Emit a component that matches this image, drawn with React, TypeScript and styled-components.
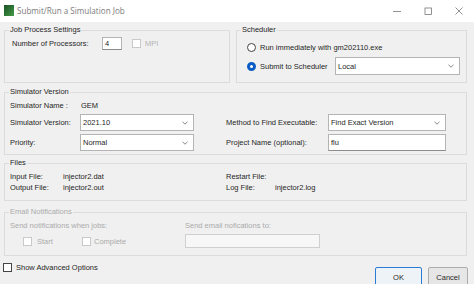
import React from "react";
import styled, { createGlobalStyle } from "styled-components";

const GlobalStyle = createGlobalStyle`
  html, body {
    margin: 0;
    padding: 0;
    background: #f0f0f0;
  }
  body {
    font-family: "Liberation Sans", Arial, sans-serif;
    font-size: 7.5px;
    color: #262626;
  }
`;

const Window = styled.div`
  width: 474px;
  height: 284px;
  overflow: hidden;
  background: #f0f0f0;
`;

const TitleBar = styled.div`
  height: 22px;
  background: #ffffff;
  display: flex;
  align-items: center;
`;

const AppIcon = styled.div`
  width: 10px;
  height: 11px;
  margin: 0 3px 1px 4px;
  background: linear-gradient(135deg, #1f4f25 0%, #2f7a38 55%, #4a9a4a 100%);
`;

const Title = styled.div`
  flex: 1;
  font-family: "Open Sans", "Noto Sans", sans-serif;
  font-size: 8.1px;
  color: #7b7b7b;
  margin-bottom: 1px;
`;

const ControlButton = styled.div`
  width: 31px;
  height: 22px;
  display: flex;
  align-items: center;
  justify-content: center;
`;

const Body = styled.div`
  padding: 3px 7px 0 4px;
  display: flex;
  flex-direction: column;
`;

const TopRow = styled.div`
  display: flex;
  gap: 6px;
`;

const Group = styled.fieldset<{ $w?: number; $h?: number; $gapTop?: number; $disabled?: boolean }>`
  box-sizing: border-box;
  margin: ${(p) => p.$gapTop ?? 0}px 0 0 0;
  padding: 0 6px 0 6px;
  border: 1px solid #dcdcdc;
  min-inline-size: 0;
  ${(p) => (p.$w ? `width: ${p.$w}px;` : "")}
  ${(p) => (p.$h ? `height: ${p.$h}px;` : "")}
  color: ${(p) => (p.$disabled ? "#ababab" : "#262626")};
`;

const Legend = styled.legend`
  padding: 0 1px;
  margin-left: -2px;
  line-height: 10px;
  font-size: 7.5px;
`;

const Row = styled.div<{ $h?: number; $mt?: number }>`
  display: flex;
  align-items: center;
  height: ${(p) => p.$h ?? 13}px;
  margin-top: ${(p) => p.$mt ?? 0}px;
`;

const Label = styled.span<{ $w?: number }>`
  display: inline-block;
  flex-shrink: 0;
  ${(p) => (p.$w ? `width: ${p.$w}px;` : "")}
  white-space: nowrap;
`;

const TextBox = styled.div<{ $w: number; $h?: number; $disabled?: boolean }>`
  box-sizing: border-box;
  width: ${(p) => p.$w}px;
  height: ${(p) => p.$h ?? 17}px;
  background: ${(p) => (p.$disabled ? "#f7f7f7" : "#ffffff")};
  border: 1px solid ${(p) => (p.$disabled ? "#cfcfcf" : "#b4b4b4")};
  border-bottom-color: ${(p) => (p.$disabled ? "#cfcfcf" : "#8c8c8c")};
  padding: 0 2px;
  display: flex;
  align-items: center;
  color: #262626;
`;

const Combo = styled.div<{ $w: number; $h?: number }>`
  box-sizing: border-box;
  width: ${(p) => p.$w}px;
  height: ${(p) => p.$h ?? 17}px;
  background: #ffffff;
  border: 1px solid #b4b4b4;
  padding: 0 5px 0 2px;
  display: flex;
  align-items: center;
  justify-content: space-between;
  color: #262626;
`;

const Check = styled.span<{ $disabled?: boolean }>`
  box-sizing: border-box;
  display: inline-block;
  flex-shrink: 0;
  width: 9px;
  height: 9px;
  background: #ffffff;
  border: 1px solid ${(p) => (p.$disabled ? "#c9c9c9" : "#444444")};
`;

const Radio = styled.span<{ $checked?: boolean }>`
  box-sizing: border-box;
  display: inline-block;
  flex-shrink: 0;
  width: 9px;
  height: 9px;
  border-radius: 50%;
  background: #ffffff;
  border: ${(p) => (p.$checked ? "3px solid #0b5cc5" : "1px solid #444444")};
`;

const ChoiceText = styled.span<{ $w?: number; $gap?: number }>`
  margin-left: ${(p) => p.$gap ?? 4}px;
  white-space: nowrap;
  ${(p) => (p.$w ? `width: ${p.$w}px; flex-shrink: 0;` : "")}
`;

const SimGrid = styled.div`
  display: grid;
  grid-template-columns: 70px 146px 102px 118px;
  grid-template-rows: 12px 17px 17px;
  row-gap: 3px;
  align-items: center;
  margin: 2px 0 3px -1px;
`;

const FilesGrid = styled.div`
  display: grid;
  grid-template-columns: 53px 163px 49px auto;
  grid-auto-rows: 11px;
  align-items: center;
  margin: 3px 0 0 -1px;
`;

const EmailBody = styled.div`
  display: flex;
  margin: 3px 0 0 -1px;
`;

const Column = styled.div<{ $w?: number }>`
  display: flex;
  flex-direction: column;
  ${(p) => (p.$w ? `width: ${p.$w}px;` : "")}
`;

const Footer = styled.div`
  display: flex;
  justify-content: space-between;
  align-items: flex-start;
  margin: 6px -1px 0 -1px;
`;

const FooterCheck = styled.div`
  display: flex;
  align-items: center;
  height: 10px;
`;

const Buttons = styled.div`
  display: flex;
  gap: 6px;
  margin-top: 5px;
`;

const Button = styled.div<{ $w: number; $primary?: boolean }>`
  box-sizing: border-box;
  width: ${(p) => p.$w}px;
  height: 20px;
  display: flex;
  align-items: center;
  justify-content: center;
  background: ${(p) => (p.$primary ? "#eef3f8" : "#e6e6e6")};
  border: 1px solid ${(p) => (p.$primary ? "#2a7bd3" : "#adadad")};
  border-radius: 2px;
`;

const Chevron = () => (
  <svg width="6" height="4" viewBox="0 0 6 4">
    <path d="M0.5 0.8 L3 3.2 L5.5 0.8" fill="none" stroke="#6a6a6a" strokeWidth="0.8" />
  </svg>
);

export default function App() {
  return (
    <>
      <GlobalStyle />
      <Window>
        <TitleBar>
          <AppIcon />
          <Title>Submit/Run a Simulation Job</Title>
          <ControlButton>
            <svg width="10" height="10" viewBox="0 0 10 10">
              <path d="M1 5.5 H9" stroke="#777" strokeWidth="0.8" />
            </svg>
          </ControlButton>
          <ControlButton>
            <svg width="10" height="10" viewBox="0 0 10 10">
              <rect x="2" y="2" width="6.5" height="6.5" fill="none" stroke="#777" strokeWidth="0.8" />
            </svg>
          </ControlButton>
          <ControlButton>
            <svg width="10" height="10" viewBox="0 0 10 10">
              <path d="M1.5 1.5 L8.5 8.5 M8.5 1.5 L1.5 8.5" stroke="#777" strokeWidth="0.8" />
            </svg>
          </ControlButton>
        </TitleBar>

        <Body>
          <TopRow>
            <Group $w={227} $h={58}>
              <Legend>Job Process Settings</Legend>
              <Row $mt={2}>
                <Label $w={90} style={{ marginLeft: 1 }}>Number of Processors:</Label>
                <TextBox $w={20} $h={13}>4</TextBox>
                <Check $disabled style={{ marginLeft: 10 }} />
                <ChoiceText style={{ color: "#b4b4b4" }}>MPI</ChoiceText>
              </Row>
            </Group>

            <Group $w={232} $h={58}>
              <Legend>Scheduler</Legend>
              <Row $mt={6} $h={13} style={{ marginLeft: 4 }}>
                <Radio />
                <ChoiceText>Run immediately with gm202110.exe</ChoiceText>
              </Row>
              <Row $mt={3} $h={18} style={{ marginLeft: 4 }}>
                <Radio $checked />
                <ChoiceText $w={75}>Submit to Scheduler</ChoiceText>
                <Combo $w={126} $h={18}>
                  <span>Local</span>
                  <Chevron />
                </Combo>
              </Row>
            </Group>
          </TopRow>

          <Group $gapTop={4}>
            <Legend>Simulator Version</Legend>
            <SimGrid>
              <Label>Simulator Name :</Label>
              <Label style={{ marginLeft: 1 }}>GEM</Label>
              <span />
              <span />

              <Label>Simulator Version:</Label>
              <Combo $w={114}>
                <span>2021.10</span>
                <Chevron />
              </Combo>
              <Label>Method to Find Executable:</Label>
              <Combo $w={118}>
                <span>Find Exact Version</span>
                <Chevron />
              </Combo>

              <Label>Priority:</Label>
              <Combo $w={114}>
                <span>Normal</span>
                <Chevron />
              </Combo>
              <Label>Project Name (optional):</Label>
              <TextBox $w={118}>flu</TextBox>
            </SimGrid>
          </Group>

          <Group $gapTop={3} $h={43}>
            <Legend>Files</Legend>
            <FilesGrid>
              <Label>Input File:</Label>
              <Label>injector2.dat</Label>
              <Label>Restart File:</Label>
              <span />
              <Label>Output File:</Label>
              <Label>injector2.out</Label>
              <Label>Log File:</Label>
              <Label>injector2.log</Label>
            </FilesGrid>
          </Group>

          <Group $gapTop={6} $h={49} $disabled>
            <Legend>Email Notifications</Legend>
            <EmailBody>
              <Column $w={175}>
                <Row $h={10}>
                  <Label>Send notifications when jobs:</Label>
                </Row>
                <Row $h={14} $mt={4} style={{ paddingLeft: 13 }}>
                  <Check $disabled />
                  <ChoiceText $w={45} $gap={5}>Start</ChoiceText>
                  <Check $disabled />
                  <ChoiceText $gap={3}>Complete</ChoiceText>
                </Row>
              </Column>
              <Column>
                <Row $h={10}>
                  <Label>Send email nofications to:</Label>
                </Row>
                <Row $h={14} $mt={4}>
                  <TextBox $w={135} $h={14} $disabled />
                </Row>
              </Column>
            </EmailBody>
          </Group>

          <Footer>
            <FooterCheck>
              <Check />
              <ChoiceText>Show Advanced Options</ChoiceText>
            </FooterCheck>
            <Buttons>
              <Button $w={47} $primary>OK</Button>
              <Button $w={40}>Cancel</Button>
            </Buttons>
          </Footer>
        </Body>
      </Window>
    </>
  );
}
